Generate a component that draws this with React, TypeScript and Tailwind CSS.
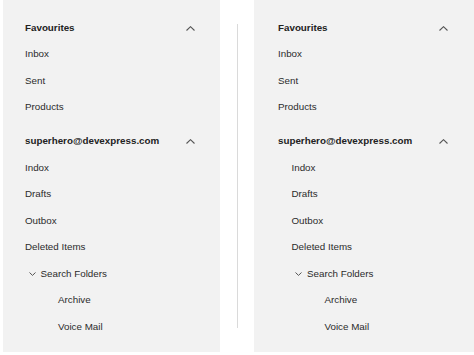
import React from "react";

const font = { fontFamily: '"Liberation Sans", Arial, sans-serif' };

function ChevronUp() {
  return (
    <svg width="9" height="5" viewBox="0 0 9 5" className="shrink-0">
      <polyline points="0.5,4.5 4.5,0.7 8.5,4.5" fill="none" stroke="#555" strokeWidth="1.1" />
    </svg>
  );
}

function ChevronDown() {
  return (
    <svg width="7" height="4" viewBox="0 0 7 4" className="shrink-0">
      <polyline points="0.5,0.5 3.5,3.4 6.5,0.5" fill="none" stroke="#555" strokeWidth="1" />
    </svg>
  );
}

function Header({ label, pr, extra = "" }: { label: string; pr: string; extra?: string }) {
  return (
    <div className={`flex h-[26.5px] items-center justify-between ${pr} ${extra}`}>
      <span className="text-[9.8px] font-bold text-[#222]">{label}</span>
      <ChevronUp />
    </div>
  );
}

function Item({ label, cls = "" }: { label: string; cls?: string }) {
  return <div className={`flex h-[26.5px] items-center text-[9.8px] text-[#2b2b2b] ${cls}`}>{label}</div>;
}

function Panel({ indented }: { indented: boolean }) {
  const sub = indented ? "pl-[13.5px]" : "";
  const pr = indented ? "pr-[26px]" : "pr-[25px]";
  return (
    <div className="flex flex-col">
      <Header label="Favourites" pr={pr} />
      <Item label="Inbox" />
      <Item label="Sent" />
      <Item label="Products" />
      <Header label="superhero@devexpress.com" pr={pr} extra="mt-[7.5px]" />
      <div className={`flex flex-col ${sub}`}>
        <Item label="Indox" />
        <Item label="Drafts" />
        <Item label="Outbox" />
        <Item label="Deleted Items" />
        <div className="flex h-[26.5px] items-center pl-[3.5px] text-[9.8px] text-[#2b2b2b]">
          <ChevronDown />
          <span className="ml-[5px]">Search Folders</span>
        </div>
        <Item label="Archive" cls="pl-[33px]" />
        <Item label="Voice Mail" cls="pl-[33px]" />
      </div>
    </div>
  );
}

export default function App() {
  return (
    <div className="flex h-[355px] w-[474px] overflow-hidden bg-white" style={font}>
      <div className="ml-[3px] h-[352px] w-[217px] shrink-0 bg-[#f2f2f2] pl-[22px] pt-[15px]">
        <Panel indented={false} />
      </div>
      <div className="w-[34px] shrink-0 pl-[17px]">
        <div className="mt-[24px] h-[304px] w-px bg-[#dadada]" />
      </div>
      <div className="h-[352px] w-[220px] shrink-0 bg-[#f2f2f2] pl-[24px] pt-[15px]">
        <Panel indented={true} />
      </div>
    </div>
  );
}
